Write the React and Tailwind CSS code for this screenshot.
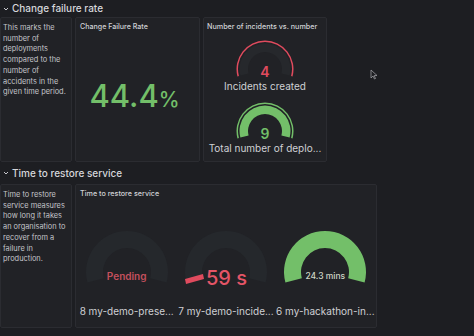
import React from "react";

const pt = (cx, cy, r, a) => {
  const t = (a * Math.PI) / 180;
  return [cx + r * Math.sin(t), cy - r * Math.cos(t)];
};

// annular sector, angles in degrees measured clockwise from the top
const arcPath = (cx, cy, r1, r2, a0, a1) => {
  const large = a1 - a0 > 180 ? 1 : 0;
  const [x0, y0] = pt(cx, cy, r2, a0);
  const [x1, y1] = pt(cx, cy, r2, a1);
  const [x2, y2] = pt(cx, cy, r1, a1);
  const [x3, y3] = pt(cx, cy, r1, a0);
  return `M${x0} ${y0} A${r2} ${r2} 0 ${large} 1 ${x1} ${y1} L${x2} ${y2} A${r1} ${r1} 0 ${large} 0 ${x3} ${y3} Z`;
};

const Chevron = () => (
  <svg width="6" height="6" viewBox="0 0 6 6" className="mr-[3px]">
    <path d="M1 2 L3 4 L5 2" stroke="#c8c9ce" strokeWidth="1" fill="none" />
  </svg>
);

const RowHeader = ({ title, className }) => (
  <div className={`flex items-center pl-[3px] text-[10px] font-medium text-[#d6d7db] ${className}`}>
    <Chevron />
    {title}
  </div>
);

const Panel = ({ className, children }) => (
  <div className={`bg-[#212226] border border-[#2b2c31] rounded-[2px] ${className}`}>{children}</div>
);

const SmallGauge = ({ value, color, label, filled }) => (
  <div className="flex flex-col items-center">
    <div className="relative w-[60px] h-[38px]">
      <svg width="60" height="38" viewBox="0 0 60 38">
        <path d={arcPath(30, 30, 27, 28.5, -105, 105)} fill={color} />
        <path d={arcPath(30, 30, 17, 25.5, -105, 105)} fill={filled ? color : "#26282c"} />
      </svg>
      <div
        className="absolute left-0 right-0 bottom-[-3px] text-center text-[14px] font-semibold leading-[16px]"
        style={{ color }}
      >
        {value}
      </div>
    </div>
    <div className="mt-[2px] text-[10px] leading-[14px] text-[#cfd0d4] whitespace-nowrap">{label}</div>
  </div>
);

const BigGauge = ({ label, children, fill }) => (
  <div className="flex flex-col items-center">
    <div className="relative w-[100px] h-[56px] mt-[30px]">
      <svg width="100" height="56" viewBox="0 0 100 56">
        <path d={arcPath(50, 43, 24, 41, -105, 105)} fill={fill || "#25282c"} />
      </svg>
      {children}
    </div>
    <div className="mt-[19px] text-[10px] leading-[14px] text-[#cfd0d4] whitespace-nowrap">{label}</div>
  </div>
);

const Cursor = () => (
  <svg width="8" height="11" viewBox="0 0 8 11" className="absolute left-[370px] top-[69px]">
    <path d="M1 1 L1 9 L3 7 L4.5 10 L5.5 9.5 L4.2 6.6 L7 6.5 Z" fill="#1d1e22" stroke="#9a9ba0" strokeWidth="0.8" />
  </svg>
);

export default function App() {
  return (
    <div
      className="relative w-[474px] h-[336px] overflow-hidden bg-[#1d1e22] text-[#cfd0d4]"
      style={{ fontFamily: "Inter, 'Noto Sans', sans-serif" }}
    >
      <RowHeader title="Change failure rate" className="h-[17px]" />
      <div className="flex gap-[3px] h-[145px]">
        <Panel className="w-[72px] px-[2px] pt-[5px]">
          <p className="text-[7.4px] leading-[10.7px] text-[#c4c5ca]">
            This marks the number of deployments compared to the number of accidents in the given time period.
          </p>
        </Panel>
        <Panel className="w-[125px] flex flex-col px-[4px] pt-[4px]">
          <div className="text-[7.1px] leading-[10px] font-medium text-[#d0d1d5]">Change Failure Rate</div>
          <div className="flex-1 flex items-center justify-center pb-[2px] pr-[6px]">
            <span className="text-[31px] font-medium text-[#73bf69] leading-none">44.4</span>
            <span className="text-[21px] font-medium text-[#73bf69] leading-none mt-[7px]">%</span>
          </div>
        </Panel>
        <Panel className="w-[124px] flex flex-col px-[3px] pt-[4px]">
          <div className="text-[7.2px] leading-[10px] font-medium text-[#d0d1d5] whitespace-nowrap">
            Number of incidents vs. number
          </div>
          <div className="mt-[7px]">
            <SmallGauge value="4" color="#e04b5e" label="Incidents created" />
          </div>
          <div className="mt-[8px]">
            <SmallGauge value="9" color="#73bf69" label="Total number of deplo..." filled />
          </div>
        </Panel>
      </div>
      <RowHeader title="Time to restore service" className="h-[22px]" />
      <div className="flex gap-[3px] h-[144px]">
        <Panel className="w-[72px] px-[2px] pt-[5px]">
          <p className="text-[7.4px] leading-[10.7px] text-[#c4c5ca]">
            Time to restore service measures how long it takes an organisation to recover from a failure in production.
          </p>
        </Panel>
        <Panel className="w-[302px] flex flex-col px-[1px] pt-[4px]">
          <div className="px-[3px] text-[7.2px] leading-[10px] font-medium text-[#d0d1d5]">Time to restore service</div>
          <div className="grid grid-cols-3">
            <BigGauge label="8 my-demo-prese...">
              <div className="absolute left-0 right-0 top-[40px] text-center text-[10px] font-semibold text-[#c4505d] leading-[14px]">
                Pending
              </div>
            </BigGauge>
            <BigGauge label="7 my-demo-incide...">
              <svg width="100" height="56" viewBox="0 0 100 56" className="absolute left-0 top-0">
                <path d="M9 50 L27 45 L28 50 L10 55 Z" fill="#e04b5e" />
              </svg>
              <div className="absolute left-[30px] top-[38px] text-[20px] font-medium text-[#e55567] leading-[22px] whitespace-nowrap">
                59 s
              </div>
            </BigGauge>
            <BigGauge label="6 my-hackathon-in..." fill="#73bf69">
              <div className="absolute left-0 right-0 top-[41px] text-center text-[8.5px] font-medium text-[#cfd6c6] leading-[12px]">
                24.3 mins
              </div>
            </BigGauge>
          </div>
        </Panel>
      </div>
      <Cursor />
    </div>
  );
}
